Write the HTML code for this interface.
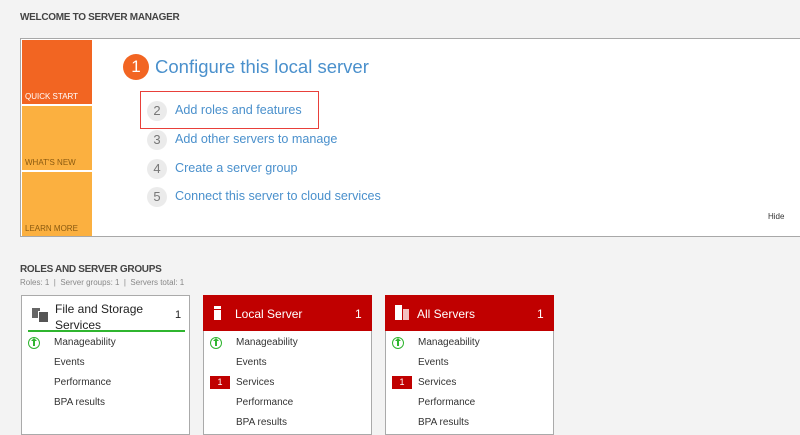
<!DOCTYPE html>
<html><head><style>
body{margin:0;width:800px;height:431px;background:#f3f3f3;font-family:"Liberation Sans",sans-serif;position:relative;overflow:hidden}
.a{position:absolute}
.h{font-size:10px;font-weight:bold;color:#444;letter-spacing:-0.3px}
.wb{left:20px;top:38px;width:790px;height:199px;border:1px solid #a8a8a8;background:#fff;box-sizing:border-box}
.tile{position:absolute;left:1px;width:70px;font-size:8px;color:#fff;box-sizing:border-box;padding:0 0 3px 3px;display:flex;align-items:flex-end}
.num{position:absolute;width:20px;height:20px;border-radius:50%;background:#ebebeb;color:#777;font-size:13px;text-align:center;line-height:20px}
.lnk{position:absolute;font-size:12.6px;color:#4a90cc}
.card{position:absolute;top:295px;width:169px;height:140px;border:1px solid #aaa;background:#fff;box-sizing:border-box}
.red{background:#c00000;height:36px;margin:-1px -1px 0 -1px;color:#fff;font-size:12px;position:relative}
.it{position:absolute;left:32px;font-size:10px;color:#333}
.up{position:absolute;left:6px;width:10px;height:10px;border:1.6px solid #2fb52f;border-radius:50%}
.up:after{content:"";position:absolute;left:4px;top:3px;width:2px;height:5px;background:#2fb52f}
.up:before{content:"";position:absolute;left:2px;top:0px;border:3px solid transparent;border-bottom:3px solid #2fb52f;border-top:0}
.badge{position:absolute;left:6px;width:20px;height:13px;background:#c00000;color:#fff;font-size:9px;text-align:center;line-height:13px}
</style></head><body>
<div class="a h" style="left:20px;top:12px">WELCOME TO SERVER MANAGER</div>
<div class="a wb">
 <div class="tile" style="top:1px;height:64px;background:#f26522">QUICK START</div>
 <div class="tile" style="top:67px;height:64px;background:#fbb040;color:#8a5a10">WHAT'S NEW</div>
 <div class="tile" style="top:133px;height:64px;background:#fbb040;color:#8a5a10">LEARN MORE</div>
 <div class="num" style="left:102px;top:15px;width:26px;height:26px;line-height:26px;background:#f26522;color:#fff;font-size:17px">1</div>
 <div class="lnk" style="left:134px;top:17px;font-size:18.5px">Configure this local server</div>
 <div class="a" style="left:119px;top:52px;width:179px;height:38px;border:1.5px solid #e8403a;box-sizing:border-box"></div>
 <div class="num" style="left:126px;top:62px">2</div><div class="lnk" style="left:154px;top:64px">Add roles and features</div>
 <div class="num" style="left:126px;top:91px">3</div><div class="lnk" style="left:154px;top:93px">Add other servers to manage</div>
 <div class="num" style="left:126px;top:120px">4</div><div class="lnk" style="left:154px;top:122px">Create a server group</div>
 <div class="num" style="left:126px;top:148px">5</div><div class="lnk" style="left:154px;top:150px">Connect this server to cloud services</div>
 <div class="a" style="left:747px;top:173px;font-size:8px;color:#333">Hide</div>
</div>
<div class="a h" style="left:20px;top:264px">ROLES AND SERVER GROUPS</div>
<div class="a" style="left:20px;top:278px;font-size:8px;color:#888">Roles: 1 &nbsp;| &nbsp;Server groups: 1 &nbsp;| &nbsp;Servers total: 1</div>

<div class="card" style="left:21px">
 <div class="a" style="left:10px;top:12px;width:8px;height:10px;background:#666"></div>
 <div class="a" style="left:16px;top:15px;width:9px;height:10px;background:#555;border:1px solid #fff"></div>
 <div class="a" style="left:33px;top:5px;font-size:12px;color:#222;line-height:16px">File and Storage<br>Services</div>
 <div class="a" style="left:153px;top:13px;font-size:11px;color:#222">1</div>
 <div class="a" style="left:6px;top:34px;width:157px;height:2px;background:#2fb52f"></div>
 <div class="up" style="top:41px"></div><div class="it" style="top:41px">Manageability</div>
 <div class="it" style="top:61px">Events</div>
 <div class="it" style="top:81px">Performance</div>
 <div class="it" style="top:101px">BPA results</div>
</div>

<div class="card" style="left:203px">
 <div class="red"><div class="a" style="left:11px;top:11px;width:7px;height:14px;background:#fff"></div><div class="a" style="left:11px;top:14px;width:7px;height:1px;background:#c00000"></div>
 <div class="a" style="left:32px;top:12px">Local Server</div><div class="a" style="left:152px;top:12px">1</div></div>
 <div class="up" style="top:41px"></div><div class="it" style="top:41px">Manageability</div>
 <div class="it" style="top:61px">Events</div>
 <div class="badge" style="top:80px">1</div><div class="it" style="top:81px">Services</div>
 <div class="it" style="top:101px">Performance</div>
 <div class="it" style="top:121px">BPA results</div>
</div>

<div class="card" style="left:385px">
 <div class="red"><div class="a" style="left:10px;top:10px;width:7px;height:15px;background:#fff"></div><div class="a" style="left:18px;top:14px;width:6px;height:11px;background:#f3c0c0"></div>
 <div class="a" style="left:32px;top:12px">All Servers</div><div class="a" style="left:152px;top:12px">1</div></div>
 <div class="up" style="top:41px"></div><div class="it" style="top:41px">Manageability</div>
 <div class="it" style="top:61px">Events</div>
 <div class="badge" style="top:80px">1</div><div class="it" style="top:81px">Services</div>
 <div class="it" style="top:101px">Performance</div>
 <div class="it" style="top:121px">BPA results</div>
</div>
</body></html>
